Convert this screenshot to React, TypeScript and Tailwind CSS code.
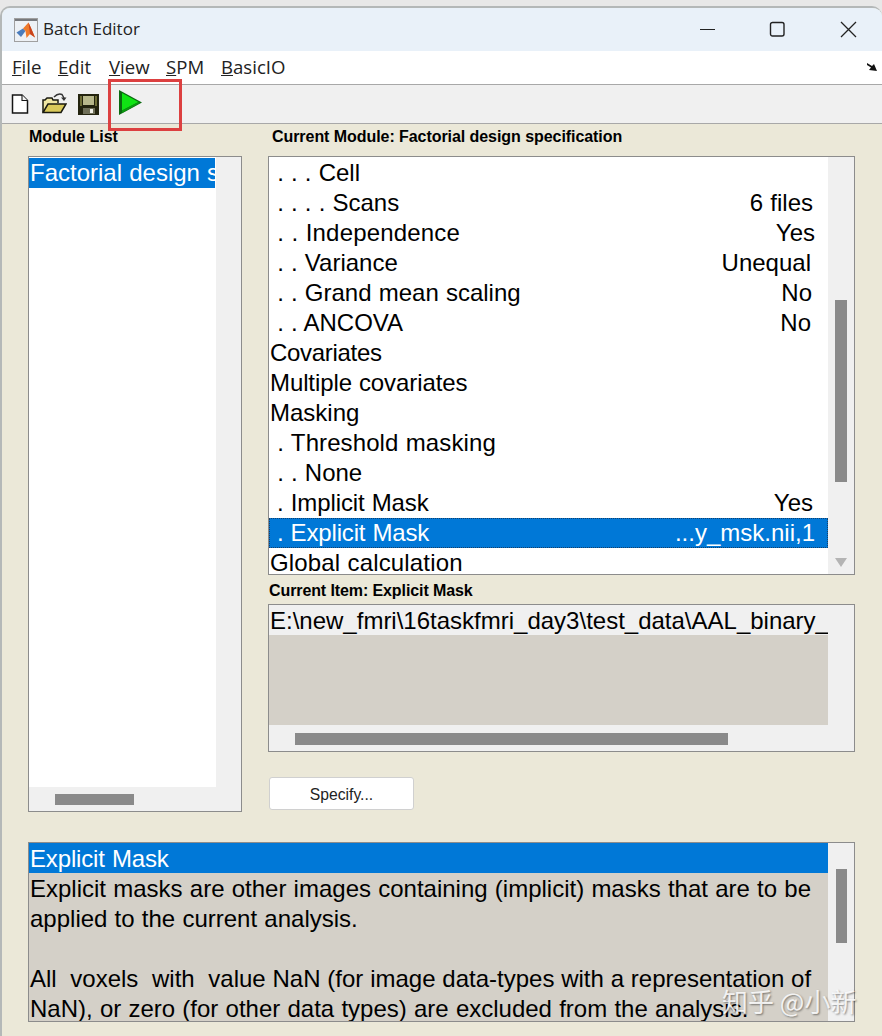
import React from 'react';

const arial = "font-['Liberation_Sans',Arial,sans-serif]";

type Row = { text: string; value?: string; valueClass?: string; textClass?: string; selected?: boolean };

const rows: Row[] = [
  { text: ' . . . Cell' },
  { text: ' . . . . Scans', value: '6 files', valueClass: 'mr-[15px]' },
  { text: ' . . Independence', value: 'Yes', valueClass: 'mr-[13px]', textClass: 'tracking-[0.18px]' },
  { text: ' . . Variance', value: 'Unequal', valueClass: 'mr-[17px]' },
  { text: ' . . Grand mean scaling', value: 'No', valueClass: 'mr-[16px]' },
  { text: ' . . ANCOVA', value: 'No', valueClass: 'mr-[17px]' },
  { text: 'Covariates', textClass: 'tracking-[-0.3px]' },
  { text: 'Multiple covariates', textClass: 'tracking-[-0.1px]' },
  { text: 'Masking' },
  { text: ' . Threshold masking', textClass: 'tracking-[0.1px]' },
  { text: ' . . None' },
  { text: ' . Implicit Mask', value: 'Yes', valueClass: 'mr-[15px]', textClass: 'tracking-[-0.1px]' },
  { text: ' . Explicit Mask', value: '...y_msk.nii,1', valueClass: 'mr-[13px]', textClass: 'tracking-[-0.15px]', selected: true },
  { text: 'Global calculation', textClass: 'tracking-[0.15px]' },
];

const MatlabLogo = () => (
  <svg width="24" height="24" viewBox="0 0 24 24">
    <rect x="0.5" y="0.5" width="23" height="23" fill="#edf1f5" stroke="#a0a0a0" />
    <rect x="1" y="1" width="22" height="2" fill="#77797d" />
    <path d="M2.5 14.5 L9 10.5 L11.5 13 L7 19 Z" fill="#4a7cbc" />
    <path d="M9 10.5 L14.5 4.5 L17 10 L21 19.5 L16 16 L12.5 20 L11.5 13 Z" fill="#ee7a2c" />
    <path d="M14.5 4.5 L17 10 L21 19.5 L16 16 Z" fill="#c9431c" />
  </svg>
);

const NewIcon = () => (
  <svg width="18" height="20" viewBox="0 0 18 20">
    <path d="M1.5 1 H11 L16.5 6.5 V19 H1.5 Z" fill="#fff" stroke="#151515" strokeWidth="1.5" />
    <path d="M11 1 V6.5 H16.5" fill="#f4f4f4" stroke="#151515" strokeWidth="1.1" />
  </svg>
);

const OpenIcon = () => (
  <svg width="25" height="21" viewBox="0 0 25 21">
    <path d="M1 19 V7 H3 L5 5 H10 L11 7 H16 V10" fill="#efe6a2" stroke="#1a1a10" strokeWidth="1.5" />
    <path d="M1 19.5 L6 11 H24 L19 19.5 Z" fill="#d9c95a" stroke="#1a1a10" strokeWidth="1.5" />
    <path d="M12 4 Q16 0 20 1.5 L22 5" fill="none" stroke="#333" strokeWidth="1.5" />
    <path d="M19 4.5 H24.5 L22 8 Z" fill="#333" />
  </svg>
);

const SaveIcon = () => (
  <svg width="21" height="21" viewBox="0 0 21 21">
    <path d="M0 0 H21 V21 H0 Z" fill="#24240f" />
    <rect x="2" y="2" width="2" height="10" fill="#6f6f38" />
    <rect x="5" y="2" width="11" height="9" fill="#b9b98c" />
    <rect x="17" y="2" width="2" height="10" fill="#6f6f38" />
    <rect x="5" y="14" width="12" height="6" fill="#6f6f58" />
    <rect x="12" y="15" width="3" height="4" fill="#f0f0e8" />
  </svg>
);

const PlayIcon = () => (
  <svg width="23" height="25" viewBox="0 0 23 25">
    <path d="M0 0 L23 12.5 L0 25 Z" fill="#0a6a10" />
    <path d="M3 3 L19.5 12 L3 20.5 Z" fill="#10e414" />
    <path d="M3 20.5 L19.5 12 L21 13 L3 23 Z" fill="#0b9a10" />
  </svg>
);

const App: React.FC = () => {
  return (
    <div className="relative w-[882px] h-[1036px] overflow-hidden bg-[#e8e8e8] pt-[6px]">
      <div className="h-[1030px] rounded-tl-[10px] rounded-tr-[10px] border-t-[2px] border-l-[2px] border-[#b4b8b8] overflow-hidden flex flex-col bg-[#ebe8d8]">
        {/* title bar */}
        <div className="h-[43px] shrink-0 bg-[#e9f1f9] flex items-center pl-[12px] font-['Open_Sans',sans-serif] text-[17px] text-[#222]">
          <MatlabLogo />
          <span className="ml-[5px] -mt-[2px]">Batch Editor</span>
          <div className="ml-auto flex items-center -mt-[1px]">
            <svg width="17" height="17" viewBox="0 0 17 17" className="mr-[53px]"><path d="M1 8.5 H16" stroke="#222" strokeWidth="1.2" /></svg>
            <svg width="17" height="17" viewBox="0 0 17 17" className="mr-[54px]"><rect x="1.5" y="1.5" width="13.5" height="13.5" rx="2" fill="none" stroke="#222" strokeWidth="1.4" /></svg>
            <svg width="17" height="17" viewBox="0 0 17 17" className="mr-[25px]"><path d="M1 1 L16 16 M16 1 L1 16" stroke="#222" strokeWidth="1.3" /></svg>
          </div>
        </div>
        {/* menu */}
        <div className="h-[34px] shrink-0 bg-white border-b border-[#a8a8a8] flex items-center pl-[10px] pb-[2px] font-['Open_Sans',sans-serif] text-[18.6px] text-[#222]">
          <span className="w-[46px]"><u>F</u>ile</span>
          <span className="w-[51px]"><u>E</u>dit</span>
          <span className="w-[57px]"><u>V</u>iew</span>
          <span className="w-[55px]"><u>S</u>PM</span>
          <span><u>B</u>asicIO</span>
          <svg width="12" height="10" viewBox="0 0 12 10" className="ml-auto mr-[4px]"><path d="M1 1 L6 4 L8 2 L11 9 L3 8 L5 5.5 L1 3 Z" fill="#111" /></svg>
        </div>
        {/* toolbar */}
        <div className="h-[39px] shrink-0 bg-[#f0f0f0] border-b border-[#a8a8a8] flex items-center pl-[9px]">
          <NewIcon />
          <span className="ml-[13px] flex -mt-[2px]"><OpenIcon /></span>
          <span className="ml-[11px] flex"><SaveIcon /></span>
          <span className="ml-[20px] flex -mt-[3px]"><PlayIcon /></span>
        </div>
        {/* body */}
        <div className={`flex-1 pl-[26px] ${arial} text-black`}>
          <div className="flex">
            <div className="w-[214px] shrink-0">
              <div className="h-[32px] pl-[1px] pt-[4px] text-[16px] font-bold leading-[18px]">Module List</div>
              <div className="h-[656px] border border-[#8c8c8c] bg-[#f0f0f0] flex flex-col">
                <div className="flex flex-1 min-h-0">
                  <div className="w-[187px] bg-white pt-[1px] overflow-hidden">
                    <div className="h-[30px] bg-[#0078d7] text-white text-[24px] leading-[30px] pl-[1px] whitespace-nowrap overflow-hidden w-[186px] [word-spacing:0.5px]">Factorial design specification</div>
                  </div>
                </div>
                <div className="h-[24px] shrink-0 pt-[7px] pl-[26px]">
                  <div className="w-[79px] h-[11px] bg-[#8a8a8a]" />
                </div>
              </div>
            </div>
            <div className="ml-[26px] w-[587px] shrink-0">
              <div className="h-[32px] pl-[4px] pt-[4px] text-[16px] font-bold leading-[18px] tracking-[-0.06px]">Current Module: Factorial design specification</div>
              <div className="h-[419px] border border-[#8c8c8c] flex bg-white">
                <div className="w-[559px] pt-[1px] overflow-hidden [word-spacing:0.5px]">
                  {rows.map((r) => (
                    <div
                      key={r.text}
                      className={`h-[30px] shrink-0 flex justify-between pl-[1px] text-[24px] leading-[30px] whitespace-pre ${r.selected ? 'bg-[#0078d7] text-white outline-1 outline-dotted -outline-offset-1 outline-[#15406a]' : ''}`}
                    >
                      <span className={r.textClass}>{r.text}</span>
                      {r.value && <span className={r.valueClass}>{r.value}</span>}
                    </div>
                  ))}
                </div>
                <div className="flex-1 bg-[#f0f0f0] pt-[143px] pl-[7px] flex flex-col">
                  <div className="w-[12px] h-[182px] bg-[#8a8a8a]" />
                  <svg width="12" height="9" viewBox="0 0 12 9" className="mt-[76px]"><path d="M0 0 H12 L6 9 Z" fill="#b4b4b4" /></svg>
                </div>
              </div>
              <div className="h-[29px] pl-[1px] pt-[7px] text-[16px] font-bold leading-[18px] tracking-[-0.1px]">Current Item: Explicit Mask</div>
              <div className="h-[148px] border border-[#8c8c8c] bg-[#f0f0f0] flex flex-col">
                <div className="flex flex-1 min-h-0">
                  <div className="w-[559px] flex flex-col">
                    <div className="h-[29px] mt-[1px] text-[24px] leading-[30px] pl-[1px] whitespace-nowrap overflow-hidden">E:\new_fmri\16taskfmri_day3\test_data\AAL_binary_mask.nii,1</div>
                    <div className="flex-1 bg-[#d4d0c8]" />
                  </div>
                </div>
                <div className="h-[26px] shrink-0 pt-[8px] pl-[26px]">
                  <div className="w-[433px] h-[12px] bg-[#8a8a8a]" />
                </div>
              </div>
              <button className="block mt-[25px] ml-[1px] w-[145px] h-[33px] pt-[2px] bg-white border border-[#d0d0d0] rounded-[3px] text-[15.7px] text-[#222]">Specify...</button>
            </div>
          </div>
          {/* help box */}
          <div className="mt-[30px] w-[827px] h-[180px] border border-[#8c8c8c] flex bg-[#f0f0f0]">
            <div className="w-[799px] bg-[#d4d0c8] text-[24px] leading-[30px] overflow-hidden [word-spacing:0.55px]">
              <div className="h-[30px] bg-[#0078d7] text-white pl-[1px] pt-[1px] tracking-[-0.15px]">Explicit Mask</div>
              <div className="pl-[1px] pt-[1px] whitespace-pre-wrap">
                <div>Explicit masks are other images containing (implicit) masks that are to be</div>
                <div>applied to the current analysis.</div>
                <div className="h-[30px]" />
                <div className="whitespace-pre [word-spacing:0.15px]">All  voxels  with  value NaN (for image data-types with a representation of</div>
                <div>NaN), or zero (for other data types) are excluded from the analysis.</div>
              </div>
            </div>
            <div className="flex-1 pt-[26px] pl-[8px]">
              <div className="w-[11px] h-[74px] bg-[#8a8a8a]" />
            </div>
          </div>
        </div>
      </div>
      {/* red annotation box */}
      <div className="absolute left-[108px] top-[79px] w-[74px] h-[52px] border-[3px] border-[#dc4040]" />
      {/* watermark */}
      <div className="absolute left-[722px] top-[983px] text-[26px] leading-[36px] text-white/85 whitespace-nowrap font-['Noto_Sans_CJK_SC','Noto_Sans',sans-serif] [text-shadow:1px_1px_2px_rgba(0,0,0,0.45)]">知乎 @小新</div>
    </div>
  );
};

export default App;
